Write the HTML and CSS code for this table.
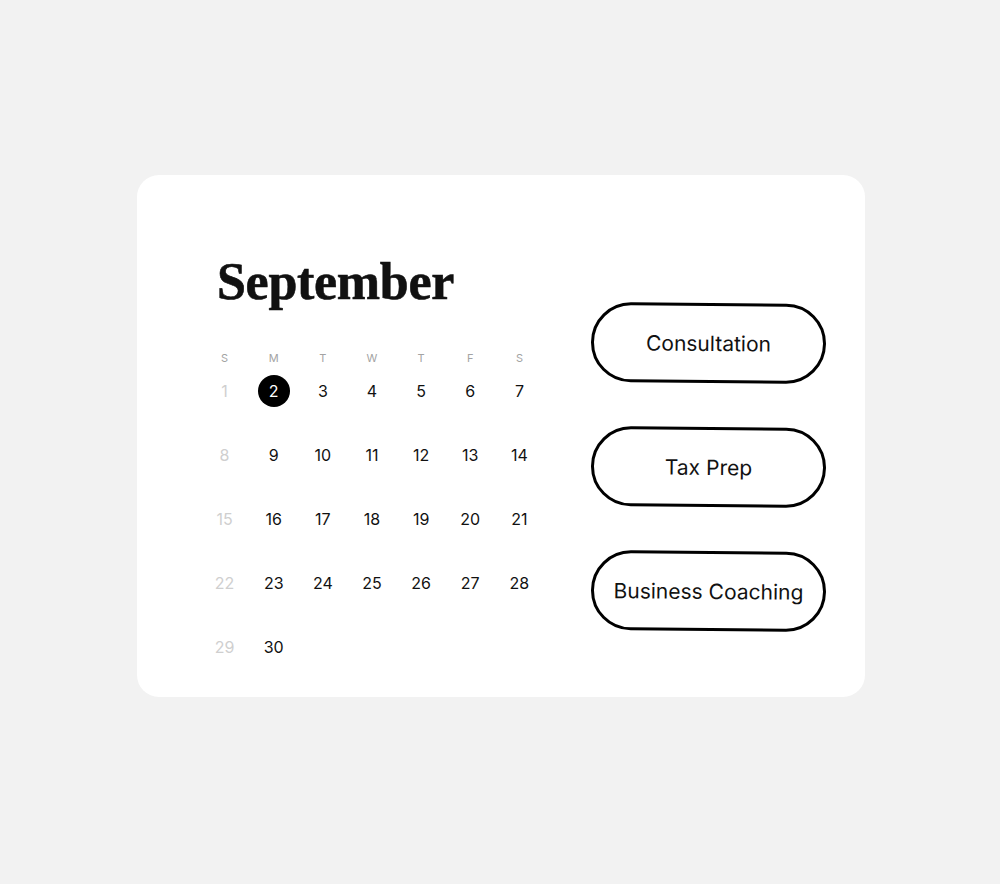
FILE: index.html
```html
<!DOCTYPE html>
<html lang="en">
<head>
<meta charset="utf-8">
<title>September</title>
<link rel="stylesheet" href="styles.css">
</head>
<body>
<div class="card">
  <div class="calendar">
    <h1 class="title">September</h1>
    <div class="weekdays">
      <span>S</span><span>M</span><span>T</span><span>W</span><span>T</span><span>F</span><span>S</span>
    </div>
    <div class="days">
      <span class="muted">1</span><span class="selected">2</span><span>3</span><span>4</span><span>5</span><span>6</span><span>7</span>
      <span class="muted">8</span><span>9</span><span>10</span><span>11</span><span>12</span><span>13</span><span>14</span>
      <span class="muted">15</span><span>16</span><span>17</span><span>18</span><span>19</span><span>20</span><span>21</span>
      <span class="muted">22</span><span>23</span><span>24</span><span>25</span><span>26</span><span>27</span><span>28</span>
      <span class="muted">29</span><span>30</span>
    </div>
  </div>
  <div class="services">
    <button class="pill">Consultation</button>
    <button class="pill">Tax Prep</button>
    <button class="pill">Business Coaching</button>
  </div>
</div>
</body>
</html>
```
FILE: styles.css
```css
html, body {
  margin: 0;
  padding: 0;
  background: #f2f2f2;
}
body {
  width: 1000px;
  height: 884px;
  font-family: Inter, "Noto Sans", sans-serif;
  color: #111;
}
.card {
  box-sizing: border-box;
  margin: 175px 0 0 137px;
  width: 728px;
  height: 522px;
  background: #fff;
  border-radius: 22px;
  display: flex;
  align-items: flex-start;
  padding: 81px 0 0 63px;
}
.calendar {
  width: 344px;
}
.title {
  margin: 0 0 0 17px;
  font-family: "Liberation Serif", "DejaVu Serif", serif;
  font-weight: 700;
  font-size: 52px;
  line-height: 52px;
  letter-spacing: -0.3px;
  color: #111;
  -webkit-text-stroke: 0.6px #111;
}
.weekdays,
.days {
  display: grid;
  grid-template-columns: repeat(7, 1fr);
}
.weekdays {
  margin-top: 40px;
  height: 20px;
  align-items: center;
}
.weekdays span {
  text-align: center;
  font-size: 11px;
  color: #a3a3a3;
}
.days {
  margin-top: 7px;
  row-gap: 32px;
}
.days span {
  justify-self: center;
  width: 32px;
  height: 32px;
  display: flex;
  align-items: center;
  justify-content: center;
  font-size: 16px;
  color: #111;
}
.days .muted {
  color: #cfcfcf;
}
.days .selected {
  background: #000;
  color: #fff;
  border-radius: 50%;
}
.services {
  margin: 47px 0 0 47px;
  display: flex;
  flex-direction: column;
  gap: 44px;
}
.pill {
  width: 235px;
  height: 80px;
  box-sizing: border-box;
  border: 3px solid #000;
  border-radius: 40px;
  background: #fff;
  font-family: Inter, "Noto Sans", sans-serif;
  font-size: 21px;
  color: #111;
  padding: 0;
  transform: rotate(0.5deg);
}
```
